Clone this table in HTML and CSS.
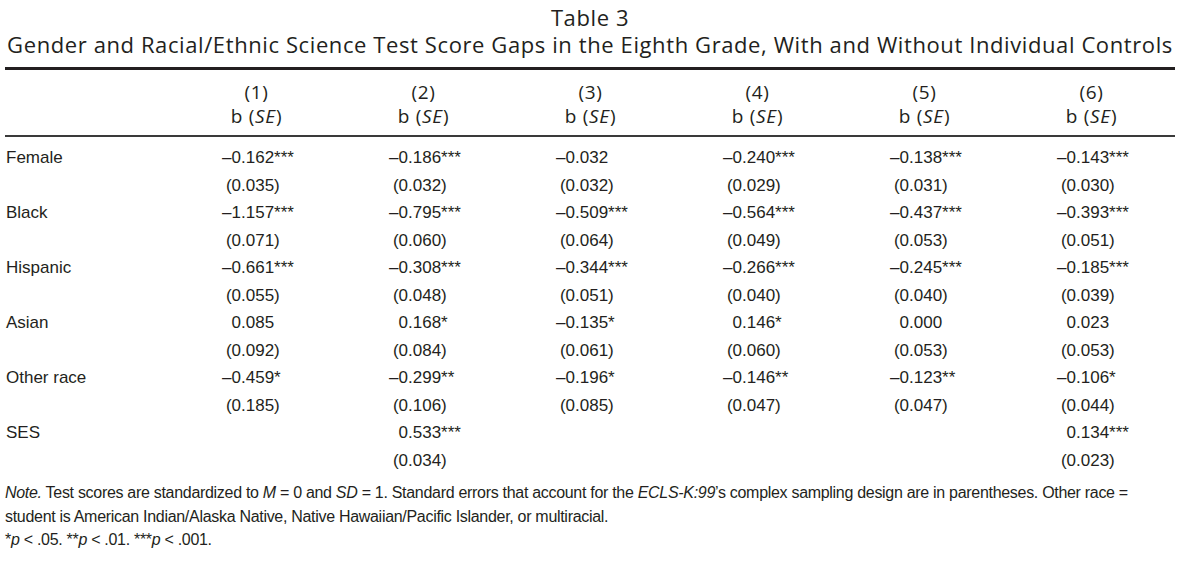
FILE: index.html
```html
<!DOCTYPE html>
<html lang="en">
<head>
<meta charset="utf-8">
<title>Table 3</title>
<link rel="stylesheet" href="styles.css">
</head>
<body>
<div class="page">
  <div class="caption">
    <div class="tnum">Table 3</div>
    <div class="ttl">Gender and Racial/Ethnic Science Test Score Gaps in the Eighth Grade, With and Without Individual Controls</div>
  </div>
  <table class="gaps">
    <colgroup>
      <col class="c-label">
      <col class="c-data"><col class="c-data"><col class="c-data">
      <col class="c-data"><col class="c-data"><col class="c-data">
    </colgroup>
    <thead>
      <tr>
        <th></th>
        <th>(1)<br>b (<i>SE</i>)</th>
        <th>(2)<br>b (<i>SE</i>)</th>
        <th>(3)<br>b (<i>SE</i>)</th>
        <th>(4)<br>b (<i>SE</i>)</th>
        <th>(5)<br>b (<i>SE</i>)</th>
        <th>(6)<br>b (<i>SE</i>)</th>
      </tr>
    </thead>
    <tbody>
      <tr class="first">
        <td class="lbl">Female</td>
        <td><span class="i">–0</span><span class="f">.162***</span></td>
        <td><span class="i">–0</span><span class="f">.186***</span></td>
        <td><span class="i">–0</span><span class="f">.032</span></td>
        <td><span class="i">–0</span><span class="f">.240***</span></td>
        <td><span class="i">–0</span><span class="f">.138***</span></td>
        <td><span class="i">–0</span><span class="f">.143***</span></td>
      </tr>
      <tr>
        <td class="lbl"></td>
        <td><span class="i">(0</span><span class="f">.035)</span></td>
        <td><span class="i">(0</span><span class="f">.032)</span></td>
        <td><span class="i">(0</span><span class="f">.032)</span></td>
        <td><span class="i">(0</span><span class="f">.029)</span></td>
        <td><span class="i">(0</span><span class="f">.031)</span></td>
        <td><span class="i">(0</span><span class="f">.030)</span></td>
      </tr>
      <tr>
        <td class="lbl">Black</td>
        <td><span class="i">–1</span><span class="f">.157***</span></td>
        <td><span class="i">–0</span><span class="f">.795***</span></td>
        <td><span class="i">–0</span><span class="f">.509***</span></td>
        <td><span class="i">–0</span><span class="f">.564***</span></td>
        <td><span class="i">–0</span><span class="f">.437***</span></td>
        <td><span class="i">–0</span><span class="f">.393***</span></td>
      </tr>
      <tr>
        <td class="lbl"></td>
        <td><span class="i">(0</span><span class="f">.071)</span></td>
        <td><span class="i">(0</span><span class="f">.060)</span></td>
        <td><span class="i">(0</span><span class="f">.064)</span></td>
        <td><span class="i">(0</span><span class="f">.049)</span></td>
        <td><span class="i">(0</span><span class="f">.053)</span></td>
        <td><span class="i">(0</span><span class="f">.051)</span></td>
      </tr>
      <tr>
        <td class="lbl">Hispanic</td>
        <td><span class="i">–0</span><span class="f">.661***</span></td>
        <td><span class="i">–0</span><span class="f">.308***</span></td>
        <td><span class="i">–0</span><span class="f">.344***</span></td>
        <td><span class="i">–0</span><span class="f">.266***</span></td>
        <td><span class="i">–0</span><span class="f">.245***</span></td>
        <td><span class="i">–0</span><span class="f">.185***</span></td>
      </tr>
      <tr>
        <td class="lbl"></td>
        <td><span class="i">(0</span><span class="f">.055)</span></td>
        <td><span class="i">(0</span><span class="f">.048)</span></td>
        <td><span class="i">(0</span><span class="f">.051)</span></td>
        <td><span class="i">(0</span><span class="f">.040)</span></td>
        <td><span class="i">(0</span><span class="f">.040)</span></td>
        <td><span class="i">(0</span><span class="f">.039)</span></td>
      </tr>
      <tr>
        <td class="lbl">Asian</td>
        <td><span class="i">0</span><span class="f">.085</span></td>
        <td><span class="i">0</span><span class="f">.168*</span></td>
        <td><span class="i">–0</span><span class="f">.135*</span></td>
        <td><span class="i">0</span><span class="f">.146*</span></td>
        <td><span class="i">0</span><span class="f">.000</span></td>
        <td><span class="i">0</span><span class="f">.023</span></td>
      </tr>
      <tr>
        <td class="lbl"></td>
        <td><span class="i">(0</span><span class="f">.092)</span></td>
        <td><span class="i">(0</span><span class="f">.084)</span></td>
        <td><span class="i">(0</span><span class="f">.061)</span></td>
        <td><span class="i">(0</span><span class="f">.060)</span></td>
        <td><span class="i">(0</span><span class="f">.053)</span></td>
        <td><span class="i">(0</span><span class="f">.053)</span></td>
      </tr>
      <tr>
        <td class="lbl">Other race</td>
        <td><span class="i">–0</span><span class="f">.459*</span></td>
        <td><span class="i">–0</span><span class="f">.299**</span></td>
        <td><span class="i">–0</span><span class="f">.196*</span></td>
        <td><span class="i">–0</span><span class="f">.146**</span></td>
        <td><span class="i">–0</span><span class="f">.123**</span></td>
        <td><span class="i">–0</span><span class="f">.106*</span></td>
      </tr>
      <tr>
        <td class="lbl"></td>
        <td><span class="i">(0</span><span class="f">.185)</span></td>
        <td><span class="i">(0</span><span class="f">.106)</span></td>
        <td><span class="i">(0</span><span class="f">.085)</span></td>
        <td><span class="i">(0</span><span class="f">.047)</span></td>
        <td><span class="i">(0</span><span class="f">.047)</span></td>
        <td><span class="i">(0</span><span class="f">.044)</span></td>
      </tr>
      <tr>
        <td class="lbl">SES</td>
        <td></td>
        <td><span class="i">0</span><span class="f">.533***</span></td>
        <td></td>
        <td></td>
        <td></td>
        <td><span class="i">0</span><span class="f">.134***</span></td>
      </tr>
      <tr>
        <td class="lbl"></td>
        <td></td>
        <td><span class="i">(0</span><span class="f">.034)</span></td>
        <td></td>
        <td></td>
        <td></td>
        <td><span class="i">(0</span><span class="f">.023)</span></td>
      </tr>
    </tbody>
  </table>
  <div class="note">
    <div class="nl"><i>Note.</i> Test scores are standardized to <i>M</i> = 0 and <i>SD</i> = 1. Standard errors that account for the <i>ECLS-K:99</i>’s complex sampling design are in parentheses. Other race =</div>
    <div class="nl">student is American Indian/Alaska Native, Native Hawaiian/Pacific Islander, or multiracial.</div>
    <div class="nl">*<i>p</i> &lt; .05. **<i>p</i> &lt; .01. ***<i>p</i> &lt; .001.</div>
  </div>
</div>
</body>
</html>
```

FILE: styles.css
```css
html, body {
  margin: 0;
  padding: 0;
  background: #ffffff;
}

.page {
  width: 1170px;
  margin-left: 5px;
  color: #231f20;
}

.caption {
  padding-top: 4px;
  text-align: center;
  font-family: "Open Sans", "Lato", sans-serif;
  font-size: 22px;
  font-weight: 500;
  letter-spacing: 0.6px;
  line-height: 27px;
  color: #231f20;
  white-space: nowrap;
}

.gaps {
  margin-top: 9px;
  width: 1170px;
  table-layout: fixed;
  border-collapse: collapse;
  border-top: 3px solid #231f20;
}

.c-label { width: 168px; }
.c-data { width: 167px; }

.gaps thead tr {
  border-bottom: 2px solid #3a3a3a;
}

.gaps th {
  padding: 10px 0 7px;
  font-family: "Open Sans", "Lato", sans-serif;
  font-weight: 500;
  font-size: 19px;
  letter-spacing: 0.7px;
  line-height: 24px;
  text-align: center;
}

.gaps td {
  padding: 0;
  height: 27.5px;
  font-family: "Liberation Sans", "Arimo", sans-serif;
  font-size: 17px;
  line-height: 27.5px;
  white-space: nowrap;
  vertical-align: top;
}

.gaps tr.first td {
  padding-top: 7px;
}

.gaps td.lbl {
  padding-left: 1px;
}

.i {
  display: inline-block;
  width: 68px;
  text-align: right;
}

.f {
  display: inline-block;
}

.note {
  margin-top: 7px;
  font-family: "Liberation Sans", "Arimo", sans-serif;
  font-size: 16px;
  letter-spacing: -0.3px;
  line-height: 23.5px;
}

.nl {
  white-space: nowrap;
}
```
